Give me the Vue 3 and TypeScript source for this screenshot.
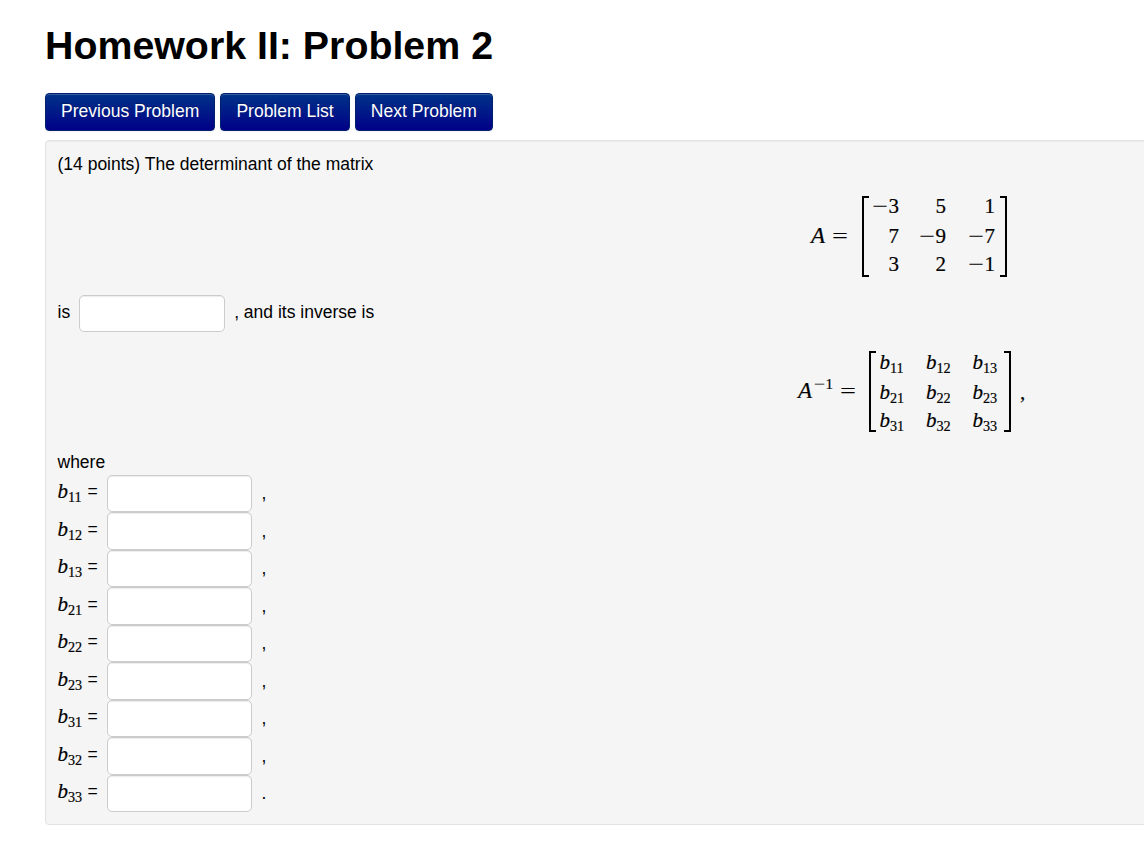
<script setup lang="ts">
import { ref } from 'vue'

interface Entry {
  id: string
  end: string
}

const buttons = ['Previous Problem', 'Problem List', 'Next Problem']

const matrix: number[][] = [
  [-3, 5, 1],
  [7, -9, -7],
  [3, 2, -1],
]

const inverse: string[][] = [
  ['11', '12', '13'],
  ['21', '22', '23'],
  ['31', '32', '33'],
]

const entries: Entry[] = inverse.flat().map((id) => ({ id, end: id === '33' ? '.' : ',' }))

const determinant = ref('')
const answers = ref<Record<string, string>>({})
</script>

<template>
  <main class="page">
    <h1 class="title">Homework II: Problem 2</h1>

    <nav class="nav">
      <button v-for="label in buttons" :key="label" class="btn" type="button">{{ label }}</button>
    </nav>

    <section class="problem">
      <p class="intro">(14 points) The determinant of the matrix</p>

      <div class="display display-matrix">
        <span class="lhs"><i class="cap">A</i><span class="equals">=</span></span>
        <div class="brackets">
          <div class="grid grid-numbers">
            <template v-for="(row, r) in matrix" :key="r">
              <span v-for="(value, c) in row" :key="c" class="cell">
                <span v-if="value < 0" class="minus">−</span>{{ Math.abs(value) }}
              </span>
            </template>
          </div>
        </div>
      </div>

      <div class="line">
        <span>is</span>
        <input v-model="determinant" class="answer answer-det" type="text" />
        <span>, and its inverse is</span>
      </div>

      <div class="display display-inverse">
        <span class="lhs"><i class="cap">A</i><span class="power"><span class="minus">−</span>1</span><span class="equals">=</span></span>
        <div class="brackets">
          <div class="grid grid-entries">
            <template v-for="row in inverse" :key="row[0]">
              <span v-for="id in row" :key="id" class="cell"><i>b</i><span class="index">{{ id }}</span></span>
            </template>
          </div>
        </div>
        <span class="comma">,</span>
      </div>

      <p class="where">where</p>
      <div v-for="entry in entries" :key="entry.id" class="entry">
        <span class="variable"><i>b</i><span class="index">{{ entry.id }}</span></span>
        <span class="entry-equals">=</span>
        <input v-model="answers[entry.id]" class="answer" type="text" />
        <span class="end">{{ entry.end }}</span>
      </div>
    </section>
  </main>
</template>

<style>
body {
  margin: 0;
  overflow: hidden;
  background: #fff;
}
</style>

<style scoped>
.page {
  box-sizing: border-box;
  height: 853px;
  padding: 25px 0 0 45px;
  overflow: hidden;
  color: #000;
  font: 17.5px/25px "Liberation Sans", Arial, sans-serif;
}

.title {
  height: 40px;
  margin: 0 0 28px;
  font-size: 39.35px;
  line-height: 40px;
  white-space: nowrap;
}

.nav {
  display: flex;
  gap: 5px;
  height: 38px;
  margin-bottom: 9px;
}

.btn {
  box-sizing: border-box;
  height: 38px;
  padding: 0 15.1px 2px;
  border: 1px solid #00206b;
  border-radius: 4px;
  background: linear-gradient(#003388, #000088);
  box-shadow: inset 0 1px 0 rgba(255, 255, 255, 0.2), 0 1px 2px rgba(0, 0, 0, 0.05);
  color: #fff;
  font: inherit;
  text-shadow: 0 -1px 0 rgba(0, 0, 0, 0.25);
  white-space: nowrap;
}

.problem {
  box-sizing: border-box;
  width: 1120px;
  height: 685px;
  padding: 5px 11.5px;
  border: 1px solid #e3e3e3;
  border-radius: 4px;
  background: #f5f5f5;
  box-shadow: inset 0 1px 1px rgba(0, 0, 0, 0.05);
}

.intro {
  height: 36px;
  margin: 0;
  line-height: 36px;
}

.display {
  display: flex;
  align-items: center;
  height: 108px;
  font: 21px/29px "Liberation Serif", "Times New Roman", serif;
  -webkit-text-stroke: 0.2px #000;
}

.display-matrix {
  padding-left: 753.5px;
}

.display-inverse {
  padding-left: 740.5px;
}

.lhs {
  display: flex;
  align-items: center;
  height: 33px;
  margin-bottom: 2px;
}

.display-matrix .lhs {
  width: 51px;
}

.display-inverse .lhs {
  width: 71px;
}

.cap {
  width: 16px;
  font-size: 23px;
}

.equals {
  margin: 2px 0 0 5px;
  transform: scaleX(1.35);
  transform-origin: left;
  -webkit-text-stroke: 0;
}

.power {
  display: flex;
  height: 33px;
  font-size: 15px;
  line-height: 20px;
}

.power .minus {
  margin: 0 2px 0 1px;
}

.power + .equals {
  margin-left: 7px;
}

.minus {
  display: inline-block;
  margin-right: 3px;
  transform: scaleX(1.35);
  -webkit-text-stroke: 0;
}

.brackets {
  box-sizing: border-box;
  display: flex;
  height: 81px;
  /* both brackets come from the corner strokes */
  background:
    linear-gradient(#000, #000) left top / 5px 2px no-repeat,
    linear-gradient(#000, #000) left bottom / 5px 2px no-repeat,
    linear-gradient(#000, #000) right top / 5px 2px no-repeat,
    linear-gradient(#000, #000) right bottom / 5px 2px no-repeat;
  border-right: 2px solid #000;
  border-left: 2px solid #000;
}

.grid {
  display: grid;
  grid-template-rows: 30px 28.5px 28.5px;
  height: 87px;
  margin-top: -4px;
}

.grid-numbers {
  grid-template-columns: 35px 47px 49px;
  width: 141px;
  text-align: right;
}

.grid-entries {
  grid-template-columns: 46.5px 46.5px 46.5px;
  box-sizing: border-box;
  width: 138px;
  padding: 1px 0 0 8.5px;
}

.cell {
  white-space: nowrap;
}

.index {
  position: relative;
  top: 4px;
  font-size: 14.2px;
  line-height: 1;
}

.comma {
  margin: 2px 0 0 9px;
}

.line {
  display: flex;
  align-items: center;
  height: 47px;
}

.line span {
  padding-bottom: 3px;
}

.answer {
  box-sizing: border-box;
  width: 145px;
  height: 37.5px;
  padding: 5px 7px;
  border: 1px solid #ccc;
  border-radius: 5px;
  outline: none;
  background: #fff;
  box-shadow: inset 0 1px 1px rgba(0, 0, 0, 0.075);
  font: inherit;
}

.answer-det {
  width: 146px;
  margin: 0 9px;
}

.where {
  height: 25px;
  margin: 4.5px 0 0;
}

.entry {
  display: flex;
  align-items: center;
  height: 37.5px;
}

.variable {
  width: 30px;
  padding-bottom: 3px;
  font: 21px/29px "Liberation Serif", "Times New Roman", serif;
  -webkit-text-stroke: 0.2px #000;
}

.entry-equals {
  width: 19.5px;
  padding-bottom: 3px;
}

.end {
  padding: 1px 0 0 9.5px;
}
</style>
